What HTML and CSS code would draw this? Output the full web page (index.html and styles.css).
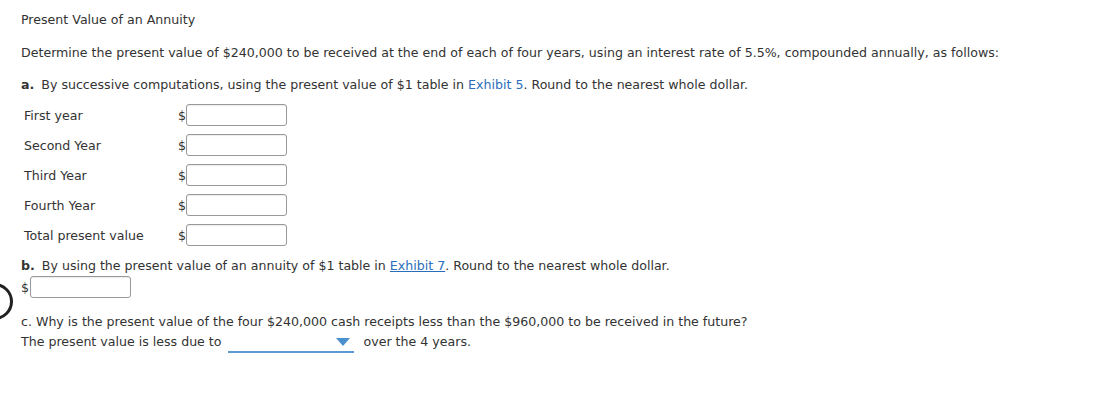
FILE: index.html
```html
<!DOCTYPE html>
<html lang="en">
  <head>
    <meta charset="UTF-8" />
    <meta name="viewport" content="width=device-width, initial-scale=1.0" />
    <title>Present Value of an Annuity</title>
    <link rel="stylesheet" href="styles.css">
  </head>
  <body>
    <span class="ring"></span>
    <div class="question">
      <p class="title">Present Value of an Annuity</p>
      <p class="intro">Determine the present value of $240,000 to be received at the end of each of four years, using an interest rate of 5.5%, compounded annually, as follows:</p>

      <p class="part"><b>a.</b> By successive computations, using the present value of $1 table in <a class="plain-link" href="#">Exhibit 5</a>. Round to the nearest whole dollar.</p>
      <table class="pv-table">
        <tr><td class="label">First year</td><td class="cur">$</td><td><input type="text" class="amount" /></td></tr>
        <tr><td class="label">Second Year</td><td class="cur">$</td><td><input type="text" class="amount" /></td></tr>
        <tr><td class="label">Third Year</td><td class="cur">$</td><td><input type="text" class="amount" /></td></tr>
        <tr><td class="label">Fourth Year</td><td class="cur">$</td><td><input type="text" class="amount" /></td></tr>
        <tr><td class="label">Total present value</td><td class="cur">$</td><td><input type="text" class="amount" /></td></tr>
      </table>

      <p class="part part-b"><b>b.</b> By using the present value of an annuity of $1 table in <a class="link" href="#">Exhibit 7</a>. Round to the nearest whole dollar.</p>
      <div class="b-answer">
        <span class="cur">$</span><input type="text" class="amount" />
      </div>

      <p class="part part-c">c. Why is the present value of the four $240,000 cash receipts less than the $960,000 to be received in the future?</p>
      <p class="answer-line">
        The present value is less due to
        <span class="dropdown"><span class="arrow"></span></span>
        over the 4 years.
      </p>
    </div>
  </body>
</html>
```

FILE: styles.css
```css
* {
  box-sizing: border-box;
}
body {
  margin: 0;
  font-family: "DejaVu Sans", Verdana, sans-serif;
  font-size: 12.6px;
  color: #333;
  background: #fff;
  position: relative;
}
.question {
  padding: 12px 21px;
}
p {
  margin: 0;
}
.title {
  line-height: 16px;
}
.intro {
  margin-top: 17px;
  line-height: 16px;
}
.part {
  margin-top: 16px;
  line-height: 16px;
}
.part b {
  margin-right: 3px;
}
.plain-link {
  color: #2a6ebb;
  text-decoration: none;
}
.link {
  color: #2a6ebb;
  text-decoration: underline;
}
.pv-table {
  border-collapse: collapse;
  margin-top: 7px;
  margin-left: 3px;
}
.pv-table td {
  padding: 4px 0;
  height: 30px;
}
.pv-table .label {
  width: 154px;
}
.cur {
  color: #333;
  padding-right: 1px;
}
.amount {
  width: 101px;
  height: 22px;
  border: 1px solid #999;
  border-radius: 3px;
  box-shadow: inset 0 1px 1px rgba(0, 0, 0, 0.08);
  vertical-align: middle;
  font: inherit;
}
.part-b {
  margin-top: 8px;
}
.b-answer {
  margin-top: 2px;
  display: flex;
  align-items: center;
  gap: 0;
}
.b-answer .amount {
  width: 101px;
}
.part-c {
  margin-top: 16px;
}
.answer-line {
  margin-top: 4px;
  line-height: 16px;
  display: flex;
  align-items: flex-start;
  gap: 6px;
}
.dropdown {
  display: inline-block;
  position: relative;
  width: 126px;
  height: 19px;
  border-bottom: 2px solid #5b9bd5;
  margin: 0 4px 0 0;
}
.arrow {
  position: absolute;
  right: 4px;
  top: 4px;
  width: 0;
  height: 0;
  border-left: 7px solid transparent;
  border-right: 7px solid transparent;
  border-top: 8px solid #4a90cf;
}
.ring {
  position: absolute;
  left: -24px;
  top: 283px;
  width: 37px;
  height: 37px;
  border: 3px solid #222;
  border-radius: 50%;
}
```
